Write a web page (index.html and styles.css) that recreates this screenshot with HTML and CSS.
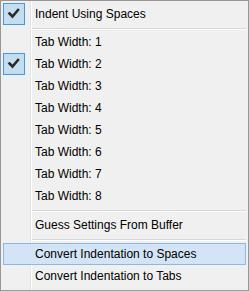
FILE: index.html
```html
<!DOCTYPE html>
<html lang="en">
<head>
    <meta charset="UTF-8">
    <title>Indentation</title>
    <link rel="stylesheet" href="styles.css">
</head>
<body>
    <div class="menu">
        <div class="item checked">
            <span class="gutter"><span class="box"><svg width="20" height="20" viewBox="0 0 20 20"><path d="M5.5 9.5 L8.5 12.5 L14 6" fill="none" stroke="#2b2b2b" stroke-width="2.6" stroke-linecap="square"/></svg></span></span>
            <span class="label">Indent Using Spaces</span>
        </div>
        <div class="sep"></div>
        <div class="item"><span class="gutter"></span><span class="label">Tab Width: 1</span></div>
        <div class="item checked">
            <span class="gutter"><span class="box"><svg width="20" height="20" viewBox="0 0 20 20"><path d="M5.5 9.5 L8.5 12.5 L14 6" fill="none" stroke="#2b2b2b" stroke-width="2.6" stroke-linecap="square"/></svg></span></span>
            <span class="label">Tab Width: 2</span>
        </div>
        <div class="item"><span class="gutter"></span><span class="label">Tab Width: 3</span></div>
        <div class="item"><span class="gutter"></span><span class="label">Tab Width: 4</span></div>
        <div class="item"><span class="gutter"></span><span class="label">Tab Width: 5</span></div>
        <div class="item"><span class="gutter"></span><span class="label">Tab Width: 6</span></div>
        <div class="item"><span class="gutter"></span><span class="label">Tab Width: 7</span></div>
        <div class="item"><span class="gutter"></span><span class="label">Tab Width: 8</span></div>
        <div class="sep wide"></div>
        <div class="item"><span class="gutter"></span><span class="label">Guess Settings From Buffer</span></div>
        <div class="sep wide"></div>
        <div class="item hover"><span class="gutter"></span><span class="label">Convert Indentation to Spaces</span></div>
        <div class="item"><span class="gutter"></span><span class="label">Convert Indentation to Tabs</span></div>
    </div>
</body>
</html>
```

FILE: styles.css
```css
html, body {
    margin: 0;
    padding: 0;
    background: #f0f0f0;
}

.menu {
    box-sizing: border-box;
    width: 249px;
    height: 291px;
    padding: 2px;
    border: 1px solid #979797;
    background-color: #f0f0f0;
    /* gutter line: grey then white */
    background-image: linear-gradient(to right,
        transparent 29px, #e2e3e3 29px, #e2e3e3 30px,
        #ffffff 30px, #ffffff 31px, transparent 31px);
    font-family: "Liberation Sans", Arial, sans-serif;
    font-size: 12px;
    color: #000;
}

.item {
    box-sizing: border-box;
    display: flex;
    align-items: center;
    height: 22px;
    border: 1px solid transparent;
}

.item.hover {
    background-color: rgba(204, 226, 246, 0.85);
    border-color: #8cb7e6;
}

.gutter {
    display: flex;
    align-items: center;
    width: 32px;
    height: 20px;
    margin-left: -1px;
}

.box {
    box-sizing: border-box;
    display: flex;
    align-items: center;
    justify-content: center;
    width: 22px;
    height: 22px;
    border: 1px solid #3d9be9;
    background-color: #c4def0;
}

.label {
    white-space: nowrap;
    line-height: 20px;
}

.sep {
    height: 6px;
    margin-left: 29px;
    background-image: linear-gradient(to bottom,
        transparent 3px, #d7d7d7 3px, #d7d7d7 4px,
        #ffffff 4px, #ffffff 5px, transparent 5px);
}

.sep.wide {
    height: 7px;
}
```
